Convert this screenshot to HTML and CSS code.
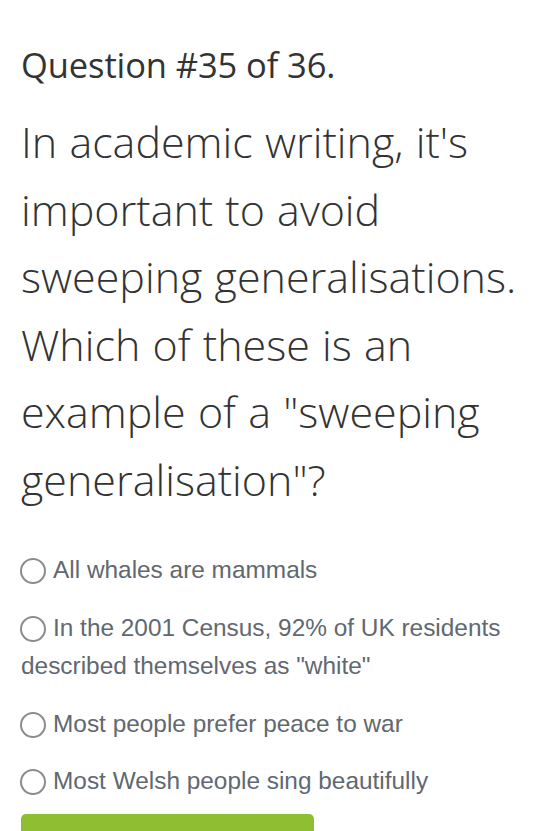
FILE: index.html
```html
<!DOCTYPE html>
<html>
<head>
<meta charset="utf-8">
<link rel="stylesheet" href="styles.css">
</head>
<body>
<main class="quiz">
  <h1 class="counter">Question #35 of 36.</h1>
  <p class="question">In academic writing, it's important to avoid sweeping generalisations. Which of these is an example of a "sweeping generalisation"?</p>
  <ul class="options">
    <li class="option"><span class="radio"></span>All whales are mammals</li>
    <li class="option"><span class="radio"></span>In the 2001 Census, 92% of UK residents described themselves as "white"</li>
    <li class="option"><span class="radio"></span>Most people prefer peace to war</li>
    <li class="option"><span class="radio"></span>Most Welsh people sing beautifully</li>
  </ul>
  <div class="submit"></div>
</main>
</body>
</html>
```

FILE: styles.css
```css
html, body {
  margin: 0;
  padding: 0;
  background: #ffffff;
}
.quiz {
  padding: 42px 10px 0 21px;
}
.counter {
  margin: 0;
  font-family: "Open Sans", sans-serif;
  font-weight: 400;
  font-size: 34.5px;
  line-height: 46px;
  letter-spacing: -0.1px;
  color: #333333;
}
.question {
  margin: 20px 0 0 0;
  font-family: "Open Sans", sans-serif;
  font-weight: 300;
  font-size: 43px;
  line-height: 67.5px;
  word-spacing: 1px;
  color: #333333;
}
.options {
  list-style: none;
  margin: 38px 0 0 0;
  padding: 0;
  font-family: "Liberation Sans", Arial, sans-serif;
  font-size: 24.4px;
  line-height: 38.5px;
  color: #616870;
}
.option {
  margin: 0 0 19px 0;
}
.radio {
  display: inline-block;
  box-sizing: border-box;
  width: 26px;
  height: 26px;
  border: 2px solid #8c8c8c;
  border-radius: 50%;
  vertical-align: -6px;
  margin: 0 7px 0 -1px;
}
.submit {
  margin-top: -6px;
  width: 293px;
  height: 40px;
  background: #8fbe32;
  border-radius: 5px;
}
```
